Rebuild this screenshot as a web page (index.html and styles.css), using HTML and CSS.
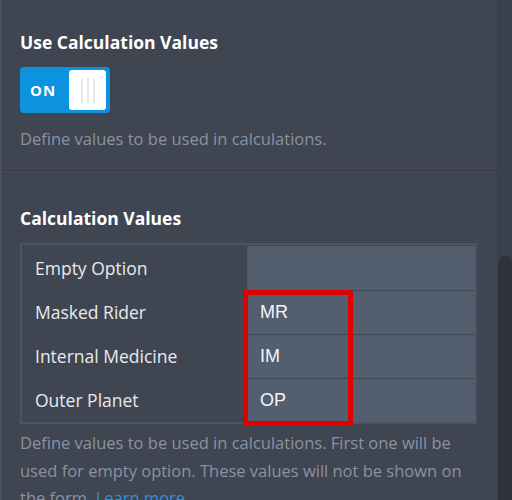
FILE: index.html
```html
<!DOCTYPE html>
<html>
<head>
<meta charset="utf-8">
<link rel="stylesheet" href="styles.css">
</head>
<body>
<div class="page">
  <div class="panel">
    <section class="section first">
      <h2 class="heading">Use Calculation Values</h2>
      <div class="toggle">
        <span class="toggle-label">ON</span>
        <span class="knob"><i></i><i></i><i></i></span>
      </div>
      <p class="desc">Define values to be used in calculations.</p>
    </section>
    <section class="section second">
      <h2 class="heading">Calculation Values</h2>
      <div class="table-wrap">
        <div class="table">
          <div class="cell name">Empty Option</div><div class="cell value"></div>
          <div class="cell name">Masked Rider</div><div class="cell value">MR</div>
          <div class="cell name">Internal Medicine</div><div class="cell value">IM</div>
          <div class="cell name">Outer Planet</div><div class="cell value">OP</div>
        </div>
        <div class="highlight"></div>
      </div>
      <p class="desc long">Define values to be used in calculations. First one will be used for empty option. These values will not be shown on the form. <a class="link">Learn more.</a></p>
    </section>
  </div>
  <div class="track"><div class="thumb"></div></div>
</div>
</body>
</html>
```
FILE: styles.css
```css
html, body {
  margin: 0;
  padding: 0;
}
body {
  background: #3f4551;
  font-family: "Open Sans", "Noto Sans", sans-serif;
  width: 512px;
  height: 500px;
  overflow: hidden;
}
.page {
  display: flex;
  height: 500px;
}
.panel {
  width: 495px;
  border-left: 2px solid #4a505c;
  border-right: 1px solid #3a404b;
  background: #3f4551;
}
.track {
  flex: 1;
  background: #3b414c;
  display: flex;
  flex-direction: column;
}
.thumb {
  margin-top: 256px;
  flex: 1;
  background: #2e333b;
  border-radius: 7px 7px 0 0;
}
.section {
  padding: 0 18px;
}
.first {
  padding-top: 30px;
  padding-bottom: 21px;
  border-bottom: 1px solid #343943;
  box-shadow: 0 1px 0 #474d59;
}
.second {
  padding-top: 35px;
}
.heading {
  margin: 0;
  font-size: 17.5px;
  line-height: 24px;
  font-weight: 700;
  color: #ffffff;
}
.toggle {
  margin-top: 13px;
  width: 90px;
  height: 46px;
  box-sizing: border-box;
  background: #0b93e0;
  border-radius: 4px;
  display: flex;
  align-items: center;
  padding: 3px 4px 3px 10px;
}
.toggle-label {
  flex: 1;
  color: #ffffff;
  font-weight: 700;
  font-size: 15px;
  letter-spacing: 1px;
}
.knob {
  width: 37px;
  height: 40px;
  background: #ffffff;
  border-radius: 3px;
  display: flex;
  justify-content: center;
  align-items: center;
  gap: 4px;
}
.knob i {
  width: 2px;
  height: 25px;
  background: #e6e8ec;
}
.desc {
  margin: 16px 0 0;
  font-size: 16.5px;
  line-height: 20px;
  color: #8a93a2;
}
.table-wrap {
  position: relative;
  margin-top: 13px;
  width: 457px;
}
.table {
  display: grid;
  grid-template-columns: 226px 1fr;
  grid-auto-rows: 44px;
  border: 2px solid #4c5461;
  padding-top: 1px;
  background: #3f4551;
}
.cell {
  display: flex;
  align-items: center;
  font-size: 17.5px;
}
.name {
  padding-left: 13px;
  color: #e8eaed;
  border-right: 1px solid #4f5765;
}
.value {
  background: #535e6e;
  color: #f2f4f7;
  font-family: "Liberation Sans", Arial, sans-serif;
  font-size: 18px;
  padding-left: 12px;
  border-top: 1px solid #414854;
}
.value:nth-child(2) {
  border-top: none;
}
.highlight {
  position: absolute;
  left: 223px;
  top: 47px;
  width: 110px;
  height: 136px;
  box-sizing: border-box;
  border: 5px solid #e00000;
  border-radius: 3px;
}
.desc.long {
  margin-top: 5px;
  line-height: 27.5px;
}
.link {
  color: #3a8fd3;
}
```
